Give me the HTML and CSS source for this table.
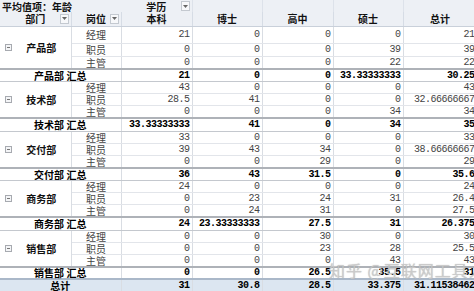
FILE: index.html
```html
<!DOCTYPE html>
<html lang="zh-CN">
<head>
<meta charset="utf-8">
<title>数据透视表</title>
<link rel="stylesheet" href="styles.css">
</head>
<body>
<div class="sheet">
<table class="pivot">
<colgroup>
<col class="c-dept"><col class="c-pos"><col class="c-v"><col class="c-v2"><col class="c-v"><col class="c-v2"><col class="c-total">
</colgroup>
<thead>
<tr class="h1">
  <th colspan="2" class="title">平均值项：年龄</th>
  <th class="field"><div class="fw"><span></span><span class="ft">学历</span><span class="dd"><svg width="5" height="3" viewBox="0 0 5 3"><path d="M0 0H5L2.5 3Z" fill="#666"/></svg></span></div></th>
  <th class="blank"></th><th class="blank"></th><th class="blank"></th><th class="blank"></th>
</tr>
<tr class="h2">
  <th class="field"><div class="fw"><span></span><span class="ft">部门</span><span class="dd"><svg width="5" height="3" viewBox="0 0 5 3"><path d="M0 0H5L2.5 3Z" fill="#666"/></svg></span></div></th>
  <th class="field"><div class="fw"><span></span><span class="ft">岗位</span><span class="dd"><svg width="5" height="3" viewBox="0 0 5 3"><path d="M0 0H5L2.5 3Z" fill="#666"/></svg></span></div></th>
  <th>本科</th><th>博士</th><th>高中</th><th>硕士</th><th>总计</th>
</tr>
</thead>
<tbody>
<tr class="first">
  <td rowspan="3" class="dept"><div class="dw"><span class="tog"></span><span class="dn">产品部</span></div></td>
  <td class="pos">经理</td><td class="n">21</td><td class="n">0</td><td class="n">0</td><td class="n">0</td><td class="n">21</td>
</tr>
<tr class="second"><td class="pos">职员</td><td class="n">0</td><td class="n">0</td><td class="n">0</td><td class="n">39</td><td class="n">39</td></tr>
<tr><td class="pos">主管</td><td class="n">0</td><td class="n">0</td><td class="n">0</td><td class="n">22</td><td class="n">22</td></tr>
<tr class="sub"><td colspan="2" class="sl">产品部&nbsp;汇总</td><td class="n">21</td><td class="n">0</td><td class="n">0</td><td class="n">33.33333333</td><td class="n">30.25</td></tr>

<tr>
  <td rowspan="3" class="dept"><div class="dw"><span class="tog"></span><span class="dn">技术部</span></div></td>
  <td class="pos">经理</td><td class="n">43</td><td class="n">0</td><td class="n">0</td><td class="n">0</td><td class="n">43</td>
</tr>
<tr><td class="pos">职员</td><td class="n">28.5</td><td class="n">41</td><td class="n">0</td><td class="n">0</td><td class="n">32.66666667</td></tr>
<tr><td class="pos">主管</td><td class="n">0</td><td class="n">0</td><td class="n">0</td><td class="n">34</td><td class="n">34</td></tr>
<tr class="sub"><td colspan="2" class="sl">技术部&nbsp;汇总</td><td class="n">33.33333333</td><td class="n">41</td><td class="n">0</td><td class="n">34</td><td class="n">35</td></tr>

<tr>
  <td rowspan="3" class="dept"><div class="dw"><span class="tog"></span><span class="dn">交付部</span></div></td>
  <td class="pos">经理</td><td class="n">33</td><td class="n">0</td><td class="n">0</td><td class="n">0</td><td class="n">33</td>
</tr>
<tr><td class="pos">职员</td><td class="n">39</td><td class="n">43</td><td class="n">34</td><td class="n">0</td><td class="n">38.66666667</td></tr>
<tr><td class="pos">主管</td><td class="n">0</td><td class="n">0</td><td class="n">29</td><td class="n">0</td><td class="n">29</td></tr>
<tr class="sub"><td colspan="2" class="sl">交付部&nbsp;汇总</td><td class="n">36</td><td class="n">43</td><td class="n">31.5</td><td class="n">0</td><td class="n">35.6</td></tr>

<tr>
  <td rowspan="3" class="dept"><div class="dw"><span class="tog"></span><span class="dn">商务部</span></div></td>
  <td class="pos">经理</td><td class="n">24</td><td class="n">0</td><td class="n">0</td><td class="n">0</td><td class="n">24</td>
</tr>
<tr><td class="pos">职员</td><td class="n">0</td><td class="n">23</td><td class="n">24</td><td class="n">31</td><td class="n">26.4</td></tr>
<tr><td class="pos">主管</td><td class="n">0</td><td class="n">24</td><td class="n">31</td><td class="n">0</td><td class="n">27.5</td></tr>
<tr class="sub"><td colspan="2" class="sl">商务部&nbsp;汇总</td><td class="n">24</td><td class="n">23.33333333</td><td class="n">27.5</td><td class="n">31</td><td class="n">26.375</td></tr>

<tr>
  <td rowspan="3" class="dept"><div class="dw"><span class="tog"></span><span class="dn">销售部</span></div></td>
  <td class="pos">经理</td><td class="n">0</td><td class="n">0</td><td class="n">30</td><td class="n">0</td><td class="n">30</td>
</tr>
<tr><td class="pos">职员</td><td class="n">0</td><td class="n">0</td><td class="n">23</td><td class="n">28</td><td class="n">25.5</td></tr>
<tr><td class="pos">主管</td><td class="n">0</td><td class="n">0</td><td class="n">0</td><td class="n">43</td><td class="n">43</td></tr>
<tr class="sub last"><td colspan="2" class="sl">销售部&nbsp;汇总</td><td class="n">0</td><td class="n">0</td><td class="n">26.5</td><td class="n">35.5</td><td class="n">31</td></tr>

<tr class="grand"><td colspan="2" class="sl">总计</td><td class="n">31</td><td class="n">30.8</td><td class="n">28.5</td><td class="n">33.375</td><td class="n">31.11538462</td></tr>
</tbody>
</table>
<div class="watermark">知乎 @互联网工具人</div>
</div>
</body>
</html>
```

FILE: styles.css
```css
* { box-sizing: border-box; }
html, body { margin: 0; padding: 0; background: #fff; }
body { width: 474px; height: 291px; overflow: hidden; }

.sheet {
  position: relative;
  width: 474px;
  height: 291px;
  overflow: hidden;
  font-family: "Noto Sans CJK SC", "Noto Sans", sans-serif;
  font-size: 10px;
  color: #333;
}

.pivot {
  border-collapse: collapse;
  table-layout: fixed;
  width: 477px;
}
.c-dept { width: 71px; }
.c-pos { width: 50px; }
.c-v { width: 71px; }
.c-v2 { width: 70px; }
.c-total { width: 74px; }

.pivot th, .pivot td {
  padding: 0 2px;
  height: 12px;
  line-height: 11px;
  white-space: nowrap;
  overflow: hidden;
  font-weight: normal;
}

/* header */
.pivot thead th {
  background: #edf0f5;
  color: #111;
  font-weight: bold;
  text-align: center;
}
.h1 th { height: 12px; }
.h1 .title { text-align: left; padding-left: 2px; }
.h1 .blank { border-right: 1px solid #dde2ea; }
.h1 .field { border-right: 1px solid #dde2ea; }
.h2 th {
  height: 14px;
  border-right: 1px solid #d6dce5;
  border-bottom: 1px solid #c9d0da;
  vertical-align: middle;
}

.fw {
  display: grid;
  grid-template-columns: 1fr auto 1fr;
  align-items: center;
}
.ft { grid-column: 2; }
.dd {
  grid-column: 3;
  justify-self: end;
  width: 9px;
  height: 10px;
  border: 1px solid #c4c9d0;
  background: #f7f8fa;
  display: flex;
  align-items: center;
  justify-content: center;
}
.dd svg { display: block; }

/* body */
.pivot tbody td {
  border-right: 1px solid #d9dde3;
  vertical-align: middle;
}
.first td { height: 17px; }
.second td { height: 13px; }

.pos {
  text-align: center;
  color: #444;
  border-bottom: 1px solid #e2e5ea;
}
.pivot tbody td.n {
  font-family: "Liberation Mono", monospace;
  font-size: 10px;
  letter-spacing: -0.5px;
  text-align: right;
  padding-right: 2px;
  color: #444;
  border-bottom: 1px solid #e2e5ea;
}

.dept {
  border-bottom: none;
}
.dw {
  display: flex;
  align-items: center;
}
.tog {
  width: 7px;
  height: 7px;
  border: 1px solid #a7aab0;
  background: #f4f5f7;
  margin-left: 3px;
  display: flex;
  align-items: center;
  justify-content: center;
  flex: none;
}
.tog::before {
  content: "";
  width: 3px;
  height: 1px;
  background: #777;
}
.dn {
  flex: 1;
  text-align: center;
  font-weight: bold;
  color: #111;
  padding-left: 2px;
}

.sub td {
  height: 13px;
  border-top: 2px solid #aeb2b8;
  border-bottom: 1px solid #c4c8ce;
  font-weight: bold;
  color: #000;
}
.pivot tbody .sub.last td { height: 11px; line-height: 10px; overflow: visible; }
.pivot tbody .sub td.n,
.pivot tbody .grand td.n {
  font-weight: bold;
  color: #000;
  border-bottom: 1px solid #c4c8ce;
}
.sl {
  text-align: center;
  font-weight: bold;
  color: #000;
}

.pivot tbody .grand td {
  height: 13px;
  line-height: 12px;
  overflow: visible;
  background: #dce6f1;
  border-top: 2px solid #aab8c9;
  font-weight: bold;
  color: #000;
  vertical-align: top;
}

.watermark {
  position: absolute;
  left: 329px;
  top: 261px;
  font-size: 16px;
  line-height: 18px;
  letter-spacing: 1px;
  color: rgba(205, 205, 205, 0.85);
  text-shadow: 0 0 1px rgba(140, 140, 140, 0.6);
  white-space: nowrap;
  pointer-events: none;
}
```
